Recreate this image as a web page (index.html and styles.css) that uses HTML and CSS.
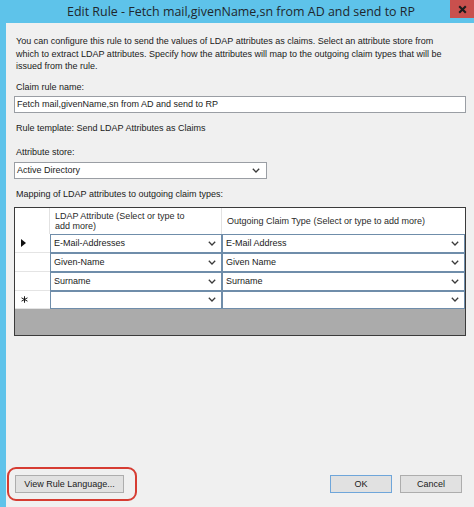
FILE: index.html
```html
<!DOCTYPE html>
<html>
<head>
<meta charset="utf-8">
<link rel="stylesheet" href="styles.css">
</head>
<body>
<div class="window">
  <div class="titlebar">
    <div class="title">Edit Rule - Fetch mail,givenName,sn from AD and send to RP</div>
    <div class="close">
      <svg width="9" height="9" viewBox="0 0 9 9"><path d="M1.2 1.2 L7.8 7.8 M7.8 1.2 L1.2 7.8" stroke="#1c1c1c" stroke-width="2.1" fill="none"/></svg>
    </div>
  </div>
  <div class="client">
    <p class="desc">You can configure this rule to send the values of LDAP attributes as claims. Select an attribute store from<br>which to extract LDAP attributes. Specify how the attributes will map to the outgoing claim types that will be<br>issued from the rule.</p>
    <div class="label l-name">Claim rule name:</div>
    <div class="textbox">Fetch mail,givenName,sn from AD and send to RP</div>
    <div class="label l-template">Rule template: Send LDAP Attributes as Claims</div>
    <div class="label l-store">Attribute store:</div>
    <div class="combo store">
      <span>Active Directory</span>
      <svg class="chev" width="8" height="5" viewBox="0 0 8 5"><path d="M0.8 0.8 L4 4 L7.2 0.8" stroke="#3a3a3a" stroke-width="1.3" fill="none"/></svg>
    </div>
    <div class="label l-map">Mapping of LDAP attributes to outgoing claim types:</div>
    <div class="grid">
      <div class="hcell corner"></div>
      <div class="hcell">LDAP Attribute (Select or type to<br>add more)</div>
      <div class="hcell last">Outgoing Claim Type (Select or type to add more)</div>

      <div class="rh"><svg width="5" height="8" viewBox="0 0 5 8"><path d="M0 0 L5 4 L0 8 Z" fill="#111"/></svg></div>
      <div class="cell"><span>E-Mail-Addresses</span><svg class="chev" width="8" height="5" viewBox="0 0 8 5"><path d="M0.8 0.8 L4 4 L7.2 0.8" stroke="#3a3a3a" stroke-width="1.3" fill="none"/></svg></div>
      <div class="cell"><span>E-Mail Address</span><svg class="chev" width="8" height="5" viewBox="0 0 8 5"><path d="M0.8 0.8 L4 4 L7.2 0.8" stroke="#3a3a3a" stroke-width="1.3" fill="none"/></svg></div>

      <div class="rh"></div>
      <div class="cell"><span>Given-Name</span><svg class="chev" width="8" height="5" viewBox="0 0 8 5"><path d="M0.8 0.8 L4 4 L7.2 0.8" stroke="#3a3a3a" stroke-width="1.3" fill="none"/></svg></div>
      <div class="cell"><span>Given Name</span><svg class="chev" width="8" height="5" viewBox="0 0 8 5"><path d="M0.8 0.8 L4 4 L7.2 0.8" stroke="#3a3a3a" stroke-width="1.3" fill="none"/></svg></div>

      <div class="rh"></div>
      <div class="cell"><span>Surname</span><svg class="chev" width="8" height="5" viewBox="0 0 8 5"><path d="M0.8 0.8 L4 4 L7.2 0.8" stroke="#3a3a3a" stroke-width="1.3" fill="none"/></svg></div>
      <div class="cell"><span>Surname</span><svg class="chev" width="8" height="5" viewBox="0 0 8 5"><path d="M0.8 0.8 L4 4 L7.2 0.8" stroke="#3a3a3a" stroke-width="1.3" fill="none"/></svg></div>

      <div class="rh star"><svg width="7" height="7" viewBox="0 0 8 8"><path d="M4 0.3 V7.7 M0.6 2.1 L7.4 5.9 M0.6 5.9 L7.4 2.1" stroke="#111" stroke-width="1.1" fill="none"/></svg></div>
      <div class="cell"><span></span><svg class="chev" width="8" height="5" viewBox="0 0 8 5"><path d="M0.8 0.8 L4 4 L7.2 0.8" stroke="#3a3a3a" stroke-width="1.3" fill="none"/></svg></div>
      <div class="cell"><span></span><svg class="chev" width="8" height="5" viewBox="0 0 8 5"><path d="M0.8 0.8 L4 4 L7.2 0.8" stroke="#3a3a3a" stroke-width="1.3" fill="none"/></svg></div>
    </div>
    <div class="buttons">
      <div class="annot">
        <button class="btn view">View Rule Language...</button>
      </div>
      <div class="spacer"></div>
      <button class="btn ok">OK</button>
      <button class="btn cancel">Cancel</button>
    </div>
  </div>
</div>
</body>
</html>
```

FILE: styles.css
```css
html, body {
  margin: 0;
  padding: 0;
}
body {
  width: 474px;
  height: 507px;
  overflow: hidden;
  font-family: "Liberation Sans", Arial, sans-serif;
  font-size: 9px;
  color: #1a1a1a;
}
.window {
  width: 474px;
  height: 507px;
  background: #5ec3ea;
  display: flex;
  flex-direction: column;
}
.titlebar {
  height: 23px;
  display: flex;
  align-items: flex-start;
  flex: none;
}
.title {
  flex: 1;
  text-align: center;
  padding-left: 32px;
  line-height: 24px;
  font-family: "Open Sans", "Noto Sans", sans-serif;
  font-size: 12.45px;
  color: #1f272d;
  white-space: nowrap;
}
.close {
  width: 24px;
  height: 18px;
  background: #c9504d;
  display: flex;
  align-items: center;
  justify-content: center;
}
.client {
  flex: 1;
  margin-left: 6px;
  background: #f0f0f0;
  padding: 12px 8px 14px 8px;
  display: flex;
  flex-direction: column;
}
.desc {
  margin: 0 0 0 2px;
  line-height: 12.5px;
  white-space: nowrap;
}
.label {
  line-height: 12px;
  padding-left: 2px;
}
.l-name { margin-top: 8px; }
.l-template { margin-top: 9px; }
.l-store { margin-top: 12px; }
.l-map { margin-top: 9px; }
.textbox {
  margin-top: 3px;
  height: 15px;
  border: 1px solid #9a9ea4;
  background: #fff;
  line-height: 15px;
  padding-left: 2px;
}
.combo {
  margin-top: 4px;
  height: 15px;
  border: 1px solid #9a9ea4;
  background: #fff;
  display: flex;
  align-items: center;
  justify-content: space-between;
  padding: 0 6px 0 2px;
}
.store {
  width: 243px;
}
.grid {
  margin-top: 7px;
  height: 127px;
  border: 1px solid #3b3b3b;
  background: #ababab;
  display: grid;
  grid-template-columns: 35px 172px 1fr;
  grid-template-rows: 26px 19px 19px 19px 18px;
  align-content: start;
}
.hcell {
  background: #fff;
  border-right: 1px solid #e2e2e2;
  display: flex;
  align-items: center;
  padding-left: 5px;
  line-height: 10px;
  color: #2a2a2a;
}
.hcell.corner { padding: 0; }
.hcell.last { border-right: none; }
.rh {
  background: #fff;
  border-bottom: 1px solid #e4e4e4;
  display: flex;
  align-items: center;
  padding-left: 6px;
}
.rh.star { padding-left: 6px; }
.cell {
  background: #fff;
  border: 1px solid #6f8daa;
  display: flex;
  align-items: center;
  justify-content: space-between;
  padding: 0 5px 0 3px;
}
.chev { flex: none; }
.buttons {
  margin-top: auto;
  display: flex;
  align-items: center;
  padding: 0 4px 0 1px;
}
.spacer { flex: 1; }
.annot {
  position: relative;
  display: flex;
}
.annot::after {
  content: "";
  position: absolute;
  left: -8px;
  right: -13px;
  top: -8px;
  bottom: -8px;
  border: 2px solid #d63c32;
  border-radius: 9px;
}
.btn {
  font-family: "Liberation Sans", Arial, sans-serif;
  font-size: 9px;
  color: #1a1a1a;
  background: #e1e1e1;
  border: 1px solid #adadad;
  height: 18px;
  padding: 0;
  margin: 0;
}
.view { width: 109px; }
.ok {
  width: 62px;
  border-color: #6fa6da;
  margin-right: 8px;
}
.cancel { width: 62px; }
```
